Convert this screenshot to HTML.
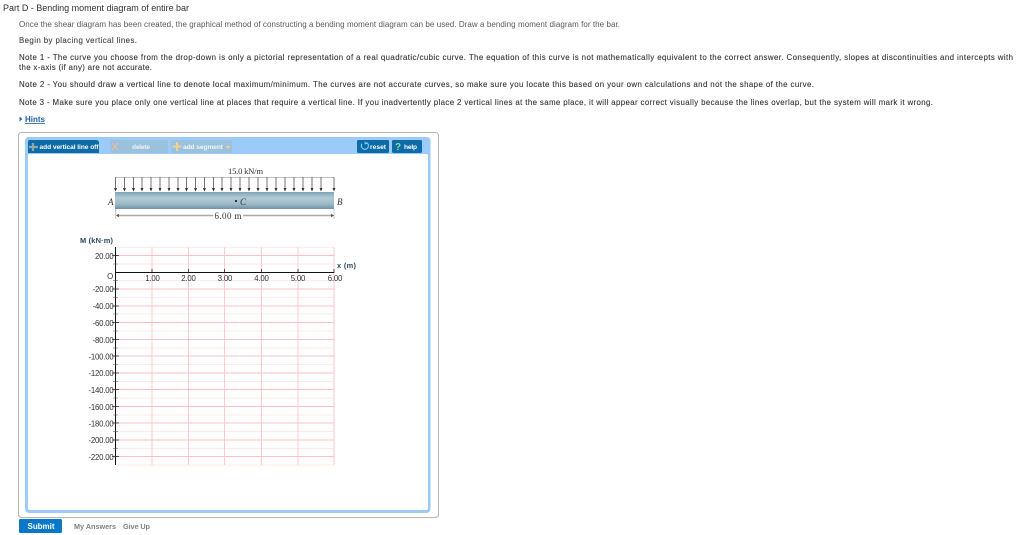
<!DOCTYPE html>
<html><head><meta charset="utf-8"><style>
html,body{margin:0;padding:0;background:#fff;width:1024px;height:535px;overflow:hidden}
svg{display:block;position:absolute;left:0;top:0;filter:blur(.3px)}
text{font-family:"Liberation Sans",sans-serif}
.t{font-size:8px;fill:#5a5a5a}
.n{font-size:7.9px;fill:#333;stroke:#333;stroke-width:.1px}
.s{font-family:"Liberation Serif",serif;font-size:9px;fill:#333}
.w{font-size:6.6px;font-weight:bold;fill:#fff}
</style></head><body>
<svg width="1024" height="535" viewBox="0 0 1024 535" xmlns="http://www.w3.org/2000/svg">
<defs><linearGradient id="bar" x1="0" y1="0" x2="0" y2="1"><stop offset="0" stop-color="#7fa3b4"/><stop offset=".35" stop-color="#b2cbd6"/><stop offset=".7" stop-color="#9dbac7"/><stop offset="1" stop-color="#6f93a4"/></linearGradient></defs>
<text x="3" y="11" font-size="9" fill="#333" textLength="186">Part D - Bending moment diagram of entire bar</text>
<text class="t" x="19" y="27" textLength="601">Once the shear diagram has been created, the graphical method of constructing a bending moment diagram can be used. Draw a bending moment diagram for the bar.</text>
<text class="n" x="19" y="43" textLength="118" style="fill:#444">Begin by placing vertical lines.</text>
<text class="n" x="19" y="60" textLength="994">Note 1 - The curve you choose from the drop-down is only a pictorial representation of a real quadratic/cubic curve. The equation of this curve is not mathematically equivalent to the correct answer. Consequently, slopes at discontinuities and intercepts with</text>
<text class="n" x="19" y="70" textLength="133">the x-axis (if any) are not accurate.</text>
<text class="n" x="19" y="87" textLength="795">Note 2 - You  should draw a vertical line to denote local maximum/minimum. The curves are not accurate curves, so make sure you locate this based on your own calculations and not the shape of the curve.</text>
<text class="n" x="19" y="105" textLength="914">Note 3 - Make sure you place only one vertical line at places that require a vertical line. If you inadvertently place 2 vertical lines at the same place, it will appear correct visually because the lines overlap, but the system will mark it wrong.</text>
<path d="M19.500 116.500l3 2.500-3 2.500z" fill="#2a6ea8"/>
<text x="25" y="122" font-size="8" font-weight="bold" fill="#1f5f9f" text-decoration="underline" textLength="20">Hints</text>

<rect x="18.500" y="132.500" width="420" height="385" rx="3" fill="#fff" stroke="#b5b5b5"/>
<rect x="25" y="137" width="405.500" height="376" rx="4" fill="#9ccbfa"/>
<rect x="28" y="154" width="400" height="356" rx="2" fill="#fff"/>

<path d="M28 153v-11q0-2 2-2h66q3 0 3 3v10z" fill="#0c6ba8"/>
<path d="M29 147h9M33 143v8" stroke="#8fa9a5" stroke-width="2.200"/>
<text class="w" x="39.500" y="149" textLength="59">add vertical line off</text>
<rect x="110" y="140" width="58" height="13" rx="2" fill="#9bc2dc"/>
<path d="M112 143l6 7M118 143l-6 7" stroke="#eeb8a4" stroke-width="1.300"/>
<text class="w" x="132" y="149" textLength="18" style="fill:#e8f2f8">delete</text>
<rect x="171" y="140" width="61" height="13" rx="2" fill="#9bc2dc"/>
<path d="M172.500 146.500h9M177 142v9" stroke="#f2cf94" stroke-width="2"/>
<text class="w" x="183" y="149" textLength="40" style="fill:#eef6fb">add segment</text>
<path d="M225 146l3 3 2.500-3z" fill="#f2cf94"/>

<rect x="357" y="140" width="32" height="13" rx="1.500" fill="#0c6ba8"/>
<path d="M366.500 142.500a3.600 3.600 0 1 1-4.600 1.200" fill="none" stroke="#7fd0f5" stroke-width="1.100"/>
<path d="M364.800 141.500l-.2 3 2.600-.8z" fill="#7fd0f5"/>
<text class="w" x="370" y="149" textLength="16">reset</text>
<rect x="392" y="140" width="30" height="13" rx="1.500" fill="#0c6ba8"/>
<text x="395" y="150" font-size="10" font-weight="bold" fill="#8fe28a">?</text>
<text class="w" x="404" y="149" textLength="13">help</text>

<!-- beam -->
<text class="s" x="228" y="174" textLength="35" style="font-size:8.6px">15.0 kN/m</text>
<path d="M115.500 177.500H334" stroke="#aaa" stroke-width=".7"/>
<g stroke="#666" stroke-width=".9" fill="none">
<path d="M115.500 177v14M124.500 177v14M133.500 177v14M142 177v14M151 177v14M160 177v14M169 177v14M178 177v14M186.500 177v14M195.500 177v14M204.500 177v14M213.500 177v14M222 177v14M231 177v14M240 177v14M249 177v14M258 177v14M267 177v14M276 177v14M285 177v14M294 177v14M303 177v14M312 177v14M321 177v14M334 177v14"/>
</g>
<path d="M114 188h3l-1.500 3.500zM123 188h3l-1.500 3.500zM132 188h3l-1.500 3.500zM140.500 188h3l-1.500 3.500zM149.500 188h3l-1.500 3.500zM158.500 188h3l-1.500 3.500zM167.500 188h3l-1.500 3.500zM176.500 188h3l-1.500 3.500zM185 188h3l-1.500 3.500zM194 188h3l-1.500 3.500zM203 188h3l-1.500 3.500zM212 188h3l-1.500 3.500zM220.500 188h3l-1.500 3.500zM229.500 188h3l-1.500 3.500zM238.500 188h3l-1.500 3.500zM247.500 188h3l-1.500 3.500zM256.500 188h3l-1.500 3.500zM265.500 188h3l-1.500 3.500zM274.500 188h3l-1.500 3.500zM283.500 188h3l-1.500 3.500zM292.500 188h3l-1.500 3.500zM301.500 188h3l-1.500 3.500zM310.500 188h3l-1.500 3.500zM319.500 188h3l-1.500 3.500zM332.500 188h3l-1.500 3.500z" fill="#333"/>
<rect x="115" y="192" width="219" height="17" fill="url(#bar)"/>
<text class="s" x="108" y="205" font-style="italic">A</text>
<text class="s" x="337" y="205" font-style="italic">B</text>
<circle cx="236" cy="201" r="1.100" fill="#222"/>
<text class="s" x="240" y="205" font-style="italic">C</text>
<path d="M115.500 209v10M334 209v10" stroke="#bbb" stroke-width=".8"/>
<path d="M117 215.500h96M243 215.500h89" stroke="#aaa" stroke-width="1.400"/>
<path d="M116 215.500l3-1.800v3.600zM334 215.500l-3-1.800v3.600z" fill="#555"/>
<text class="s" x="214.500" y="219" textLength="27">6.00 m</text>

<!-- chart -->
<g stroke="#fdeaea" stroke-width="1" fill="none">
<path d="M115 247.500H334M115 264H334M115 280.500H334M115 297.500H334M115 314H334M115 331H334M115 348H334M115 364.500H334M115 381.500H334M115 398H334M115 415H334M115 431.500H334M115 448.500H334M115 465H334"/>
</g>
<g stroke="#fcc0c0" stroke-width="1" fill="none">
<path d="M115 255.500H334M115 289H334M115 306H334M115 322.500H334M115 339.500H334M115 356H334M115 389.500H334M115 406.500H334M115 423H334M115 440H334M115 456.500H334M115 373H334"/>
</g>
<g stroke="#fdcaca" stroke-width="1" fill="none">
<path d="M152 247V465M188.500 247V465M224.500 247V465M261.500 247V465M298 247V465M334 247V465"/>
</g>
<path d="M115.500 247V465" stroke="#111" stroke-width="1"/>
<path d="M115 272.500H334" stroke="#111" stroke-width="1"/>
<path d="M112 255.500h7M112 289h7M112 306h7M112 322.500h7M112 339.500h7M112 356h7M112 373h7M112 389.500h7M112 406.500h7M112 423h7M112 440h7M112 456.500h7" stroke="#222" stroke-width=".8"/>
<path d="M113 264h5M113 280.500h5M113 297.500h5M113 314h5M113 331h5M113 348h5M113 364.500h5M113 381.500h5M113 398h5M113 415h5M113 431.500h5M113 448.500h5" stroke="#555" stroke-width=".6"/>
<path d="M152 269v4M188.500 269v4M224.500 269v4M261.500 269v4M298 269v4M334 269v4" stroke="#222" stroke-width=".8"/>
<g font-size="7.800" fill="#333" text-anchor="end" letter-spacing="-.2">
<text x="113.500" y="259">20.00</text><text x="113" y="279">O</text><text x="113.500" y="292">-20.00</text><text x="113.500" y="309">-40.00</text><text x="113.500" y="326">-60.00</text><text x="113.500" y="343">-80.00</text><text x="113.500" y="359.500">-100.00</text><text x="113.500" y="376">-120.00</text><text x="113.500" y="393">-140.00</text><text x="113.500" y="410">-160.00</text><text x="113.500" y="426.500">-180.00</text><text x="113.500" y="443">-200.00</text><text x="113.500" y="460">-220.00</text>
</g>
<g font-size="7.800" fill="#333" text-anchor="middle" letter-spacing="-.2">
<text x="152.500" y="281">1.00</text><text x="188.500" y="281">2.00</text><text x="225" y="281">3.00</text><text x="261.500" y="281">4.00</text><text x="298" y="281">5.00</text><text x="335" y="281">6.00</text>
</g>
<text x="80" y="243" font-size="7.400" font-weight="bold" fill="#2c4a5a" textLength="33">M (kN·m)</text>
<text x="337" y="268" font-size="7.400" font-weight="bold" fill="#2c4a5a" textLength="19">x (m)</text>

<rect x="19" y="519" width="43" height="14" rx="1.500" fill="#0a78c8"/>
<text x="27.500" y="529" font-size="8" font-weight="bold" fill="#fff" textLength="27">Submit</text>
<text x="74" y="529" font-size="7.300" font-weight="bold" fill="#808080" textLength="42">My Answers</text>
<text x="123" y="529" font-size="7.300" font-weight="bold" fill="#808080" textLength="27">Give Up</text>
</svg>
</body></html>
